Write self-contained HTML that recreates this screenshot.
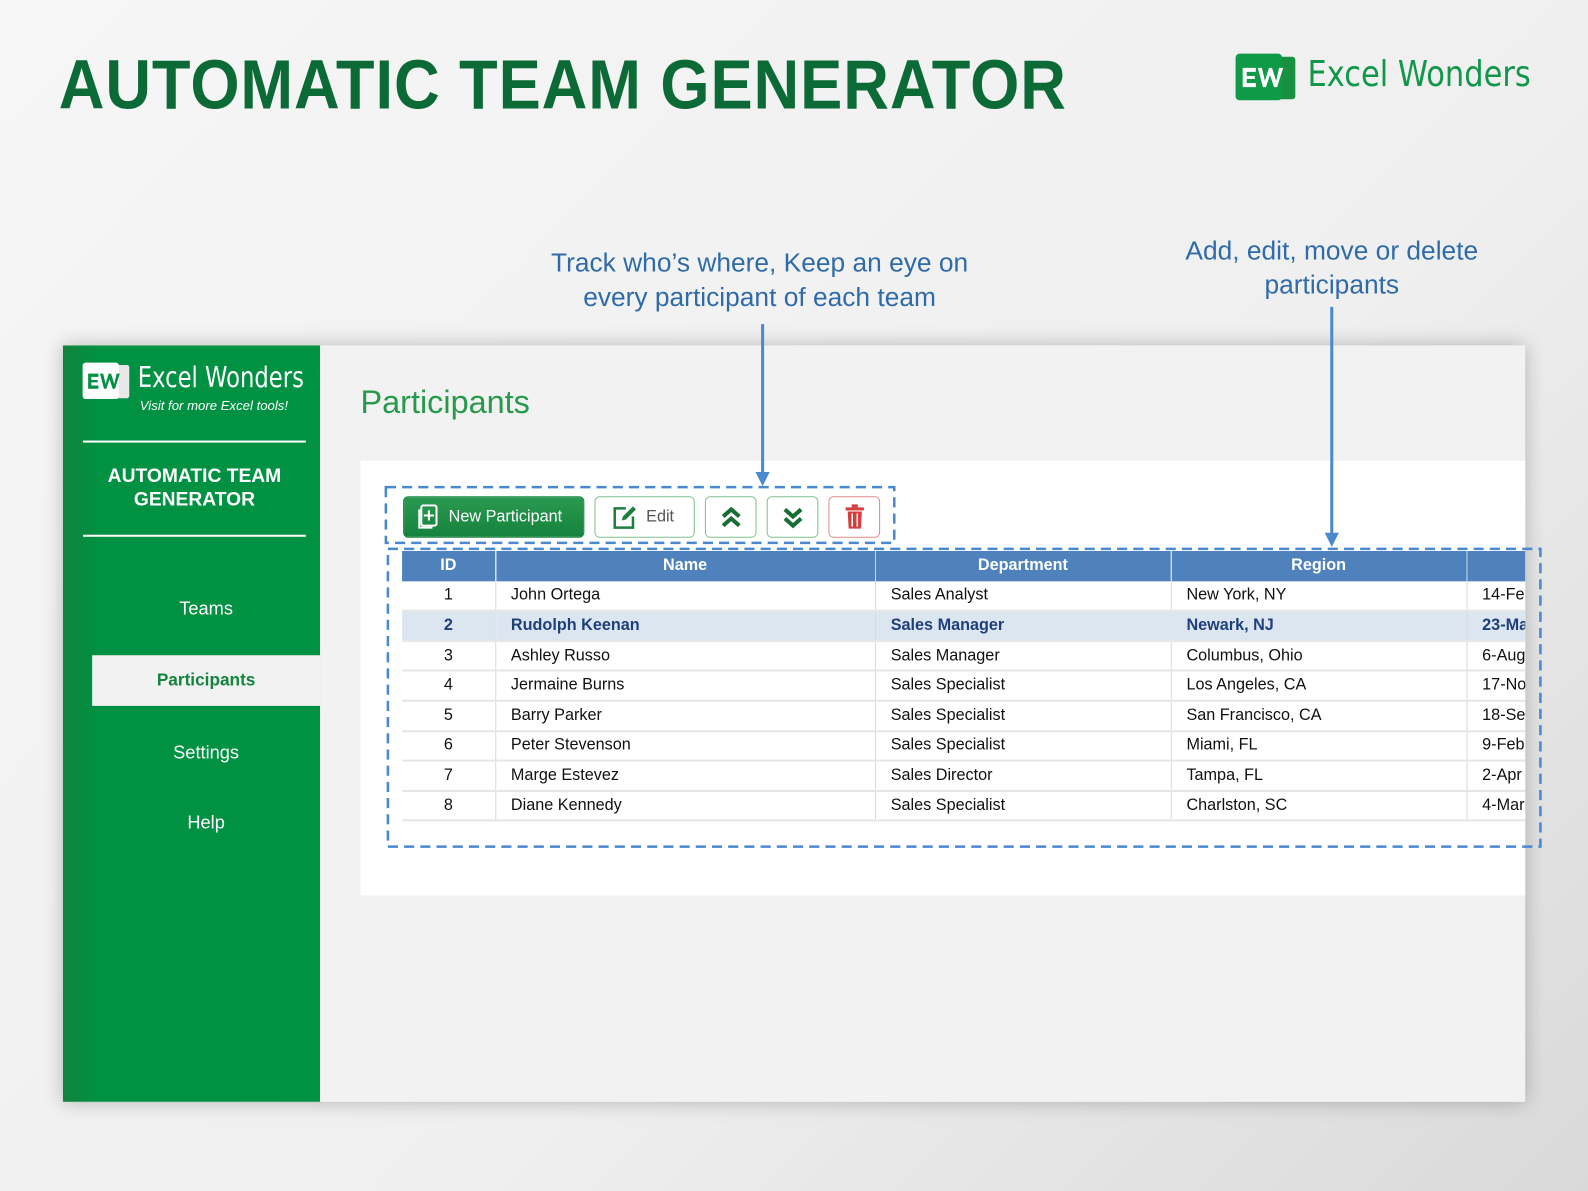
<!DOCTYPE html>
<html><head><meta charset="utf-8"><style>
*{margin:0;padding:0;box-sizing:border-box}
html,body{width:1588px;height:1191px;overflow:hidden}
body{background:linear-gradient(135deg,#f6f6f6 0%,#efefef 60%,#d9d9d9 100%);font-family:"Liberation Sans",sans-serif}
#w{position:absolute;left:0;top:0;width:1568px;height:1176px;transform:scale(1.01276);transform-origin:0 0}
.a{position:absolute}
.title{left:58px;top:44px;font-size:69px;font-weight:bold;color:#0b6a36;white-space:nowrap;transform:scaleX(0.905);transform-origin:0 0;letter-spacing:1px}
.ann{color:#2f6ba8;font-size:26px;text-align:center;line-height:34px}
.win{left:62px;top:341px;width:1444px;height:747px;background:#f2f2f2;box-shadow:0 0 18px rgba(0,0,0,.25);overflow:hidden}
.side{left:0;top:0;width:254px;height:747px;background:linear-gradient(90deg,#12833f 0%,#009142 14%,#009142 100%)}
.nav{position:absolute;left:29px;width:225px;text-align:center;color:#fff;font-size:18px}
.btn{position:absolute;top:35px;height:41px;border-radius:5px;border:1.5px solid #7fbf8f;background:#fff}
table{border-collapse:collapse;font-size:16px;color:#111}
td,th{height:29.6px;border-bottom:2px solid #e6e6e6;border-right:1px solid #d9d9d9;padding:0 15px;white-space:nowrap;overflow:hidden}
th{background:#4f81bd;color:#fff;font-weight:bold;border-right:1px solid #c5d4ea;border-bottom:none}
td:first-child{text-align:center}
tr.h td{background:#dce6f1;color:#1f3f7a;font-weight:bold}
</style></head><body><div id="w">
<div class="a title">AUTOMATIC TEAM GENERATOR</div>
<svg class="a" style="left:1218px;top:51px" width="64" height="50" viewBox="0 0 64 50"><rect x="44" y="5" width="17" height="42" rx="3" fill="#17913f"/><rect x="2" y="2" width="46" height="46" rx="4" fill="#0f9a48"/><path d="M9 16h13v4H13v4h8v3h-8v4h9v4H9z M24 16h4l3 13 4-13h3l4 13 3-13h4l-6 19h-3l-4-12-4 12h-3z" fill="#fff"/></svg>
<div class="a" style="left:1291px;top:54px;font-size:35px;color:#10974a;font-family:'DejaVu Sans',sans-serif;transform:scaleX(0.86);transform-origin:0 0;white-space:nowrap">Excel Wonders</div>
<div class="a ann" style="left:500px;top:242px;width:500px">Track who’s where, Keep an eye on<br>every participant of each team</div>
<div class="a ann" style="left:1115px;top:230px;width:400px">Add, edit, move or delete<br>participants</div>
<div class="a win">
 <div class="a side">
  <svg class="a" style="left:18px;top:14px" width="50" height="42" viewBox="0 0 64 50"><rect x="44" y="5" width="17" height="42" rx="3" fill="#e8e8e8"/><rect x="2" y="2" width="46" height="46" rx="4" fill="#fff"/><path d="M9 16h13v4H13v4h8v3h-8v4h9v4H9z M24 16h4l3 13 4-13h3l4 13 3-13h4l-6 19h-3l-4-12-4 12h-3z" fill="#009142"/></svg>
  <div class="a" style="left:74px;top:15px;color:#fff;font-size:28px;font-family:'DejaVu Sans',sans-serif;transform:scaleX(0.8);transform-origin:0 0;white-space:nowrap">Excel Wonders</div>
  <div class="a" style="left:76px;top:52px;color:#fff;font-size:13px;font-style:italic;white-space:nowrap">Visit for more Excel tools!</div>
  <div class="a" style="left:20px;top:94px;width:220px;height:2px;background:#fff"></div>
  <div class="a" style="left:0;top:118px;width:260px;text-align:center;color:#fff;font-weight:bold;font-size:19px;line-height:23px">AUTOMATIC TEAM<br>GENERATOR</div>
  <div class="a" style="left:20px;top:187px;width:220px;height:2px;background:#fff"></div>
  <div class="nav" style="top:250px">Teams</div>
  <div class="a" style="left:29px;top:306px;width:225px;height:50px;background:#f2f2f2"></div>
  <div class="nav" style="top:321px;color:#14843f;font-weight:bold;font-size:17px">Participants</div>
  <div class="nav" style="top:392px">Settings</div>
  <div class="nav" style="top:461px">Help</div>
 </div>
 <div class="a" style="left:294px;top:38px;font-size:32px;color:#27994a">Participants</div>
 <div class="a" style="left:294px;top:114px;width:1160px;height:429px;background:#fff">
  <div class="btn" style="left:42px;width:179px;background:linear-gradient(#2b9a50,#16823e);border-color:#1b8540;color:#fff;font-size:16px;padding:11px 0 0 44px">New Participant
   <svg class="a" style="left:12px;top:7px" width="22" height="26" viewBox="0 0 22 26"><rect x="5" y="1" width="15" height="20" rx="2" fill="none" stroke="#fff" stroke-width="2"/><path d="M3 5v18h13" fill="none" stroke="#fff" stroke-width="2"/><path d="M12.5 6v10M7.5 11h10" stroke="#fff" stroke-width="2"/></svg></div>
  <div class="btn" style="left:231px;width:99px;color:#555;font-size:16px;padding:11px 0 0 50px">Edit
   <svg class="a" style="left:16px;top:7px" width="26" height="26" viewBox="0 0 26 26"><path d="M14 4H3v19h18V12" fill="none" stroke="#1c7f3c" stroke-width="2.5"/><path d="M10 16l1-4 10-10 3 3-10 10z" fill="#1c7f3c"/></svg></div>
  <div class="btn" style="left:340px;width:51px"><svg class="a" style="left:13px;top:9px" width="24" height="22" viewBox="0 0 24 22"><path d="M4 10l8-7 8 7M4 19l8-7 8 7" fill="none" stroke="#176e35" stroke-width="4"/></svg></div>
  <div class="btn" style="left:401px;width:51px"><svg class="a" style="left:13px;top:9px" width="24" height="22" viewBox="0 0 24 22"><path d="M4 3l8 7 8-7M4 12l8 7 8-7" fill="none" stroke="#176e35" stroke-width="4"/></svg></div>
  <div class="btn" style="left:462px;width:51px;border-color:#e08a8a"><svg class="a" style="left:15px;top:6px" width="20" height="26" viewBox="0 0 20 26"><rect x="7" y="1" width="6" height="3" fill="#d63c3c"/><rect x="1" y="4" width="18" height="3" fill="#d63c3c"/><path d="M3 8h14l-1 17H4z" fill="#d63c3c"/><path d="M7.5 10v13M12.5 10v13" stroke="#fff" stroke-width="1.5"/></svg></div>
  <table class="a" style="left:41px;top:89px;table-layout:fixed;width:1200px">
   <colgroup><col style="width:92px"><col style="width:375px"><col style="width:292px"><col style="width:292px"><col style="width:149px"></colgroup>
   <tr><th style="text-align:center">ID</th><th style="text-align:center">Name</th><th style="text-align:center">Department</th><th style="text-align:center">Region</th><th></th></tr>
   <tr><td>1</td><td>John Ortega</td><td>Sales Analyst</td><td>New York, NY</td><td>14-Feb</td></tr>
   <tr class="h"><td>2</td><td>Rudolph Keenan</td><td>Sales Manager</td><td>Newark, NJ</td><td>23-Mar</td></tr>
   <tr><td>3</td><td>Ashley Russo</td><td>Sales Manager</td><td>Columbus, Ohio</td><td>6-Aug</td></tr>
   <tr><td>4</td><td>Jermaine Burns</td><td>Sales Specialist</td><td>Los Angeles, CA</td><td>17-Nov</td></tr>
   <tr><td>5</td><td>Barry Parker</td><td>Sales Specialist</td><td>San Francisco, CA</td><td>18-Sep</td></tr>
   <tr><td>6</td><td>Peter Stevenson</td><td>Sales Specialist</td><td>Miami, FL</td><td>9-Feb</td></tr>
   <tr><td>7</td><td>Marge Estevez</td><td>Sales Director</td><td>Tampa, FL</td><td>2-Apr</td></tr>
   <tr><td>8</td><td>Diane Kennedy</td><td>Sales Specialist</td><td>Charlston, SC</td><td>4-Mar</td></tr>
  </table>
 </div>
</div>
<svg class="a" style="left:0;top:0" width="1568" height="1176">
 <g fill="none" stroke="#4a88cf" stroke-width="2.5" stroke-dasharray="10 6">
  <rect x="381" y="481" width="502" height="55"/>
  <rect x="383" y="542" width="1138" height="294"/>
 </g>
 <g stroke="#4a88cf" stroke-width="3"><line x1="753" y1="320" x2="753" y2="468"/><line x1="1315" y1="303" x2="1315" y2="528"/></g>
 <g fill="#4a88cf"><path d="M746 466h14l-7 14z"/><path d="M1308 526h14l-7 14z"/></g>
</svg>
</div></body></html>
